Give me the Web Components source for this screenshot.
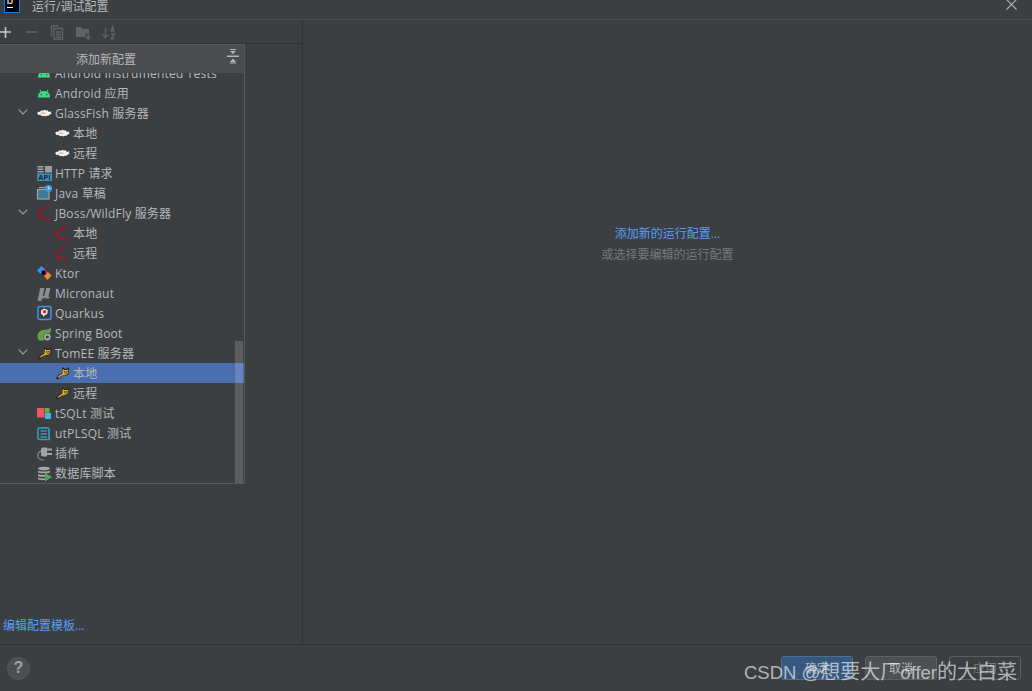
<!DOCTYPE html>
<html lang="zh">
<head>
<meta charset="utf-8">
<title>运行/调试配置</title>
<style>
	html, body { margin: 0; height: 100%; background: #3c3f41; }
	body { font: 12px "Open Sans", "Noto Sans CJK SC", sans-serif; color: #b6b8ba; }
</style>
</head>
<body>
<run-config-dialog></run-config-dialog>

<script>
const ICONS = {
	android: `<path fill="#3ddc84" d="M1 12.500c0-2.800 1-4.600 2.600-5.500L2.500 4.800l.8-.4L4.500 6.500a6 6 0 0 1 5 0l1.200-2.100.8.400L10.400 7C12 7.900 13 9.700 13 12.500z"/><circle cx="4.300" cy="9.700" r=".8" fill="#2b5a42"/><circle cx="9.700" cy="9.700" r=".8" fill="#2b5a42"/>`,
	glassfish: `<path fill="#f4f4f4" d="M0 8l2-1.500.8.4L4.500 5.200l1.500.6 1.500-1 1.500.7 1.500-.3 1.500 1.800 2.500-.7-.8 1.700 1.300 1-2 .3-1.500 1.400-2 .1-1 .7-1.500-.7-1.500.5L3 9.800l-1.500.2z"/><ellipse cx="6" cy="8.200" rx="2.800" ry="1" fill="#dcc3ad"/>`,
	api: `<rect x=".5" y="1" width="6" height="1.500" fill="#a0a2a4"/><rect x=".5" y="3.500" width="6" height="1.500" fill="#a0a2a4"/><rect x=".5" y="6" width="6" height="1.500" fill="#a0a2a4"/><rect x="8" y="1" width="7" height="6.500" fill="#9a9c9e"/><rect y="8.500" width="15" height="7.500" fill="#3f8fba"/><text x="7.500" y="14.800" text-anchor="middle" font-family="Liberation Sans" font-size="7" font-weight="700" fill="#16242c">API</text>`,
	scratch: `<rect x=".5" y="4.500" width="11.500" height="9.500" fill="#3b7c9a" stroke="#a0a2a4" stroke-width="1.200"/><path stroke="#a0a2a4" stroke-width="1.200" d="M2 2.500h7"/><circle cx="11.700" cy="3.400" r="3.400" fill="#40a0e0"/><path stroke="#fff" stroke-width=".8" fill="none" d="M11.700 1.800v1.900h1.200"/>`,
	jboss: `<g fill="#d3031c"><circle cx="11.300" cy="1" r=".9"/><circle cx="8" cy="2.700" r="1"/><circle cx="5.500" cy="3.500" r=".9"/><circle cx="3.700" cy="5.300" r="1.100"/><circle cx="2" cy="8.300" r="1.200"/><circle cx="3" cy="11.500" r="1.300"/><circle cx="6.300" cy="13.600" r="1.400"/><circle cx="10.800" cy="14.300" r="1.400"/></g>`,
	ktor: `<path fill="#16a0f5" d="M0 5.500 4.500 1 8 4.500 3.500 9z"/><path fill="#ef8a2c" d="M7 11l4-4 3.500 3.500-4 4.500z"/><path fill="#d9469e" d="M6 3l2 1.500 3 3-2.500 3L5 7z"/><rect x="4.700" y="5.600" width="4" height="4" fill="#000"/>`,
	micronaut: `<path fill="#8a8d90" d="M3.200 3h4.300L5.800 10c-.3 1.200.8 1.200 1.500.6L9.200 3h4.300l-2 8c-.2.9.3 1 1.300.7l-.3 1.400c-1.900 1-3.900.9-4.300-.5-1 .9-2 1.200-3 .9L4.200 16H.5z"/>`,
	quarkus: `<rect x="1" y="1.500" width="13" height="13" rx="2" fill="none" stroke="#4695eb" stroke-width="1.400"/><path fill="#f2e8ea" d="M4 5.500l3-2 3.800 1.500-.5 4-2.800 1.300-.7 1.900-.7-1.900-2-1.300z"/><circle cx="7.500" cy="6.700" r="1.700" fill="#d8283e"/>`,
	spring: `<path fill="#62a14a" d="M.5 11.500C.5 7.500 3.500 5 7.500 4.800c3 0 5.500-1 6.500-2.300.5 3-.5 5.500-2 6.500l-5 6.500H3C1.500 15.500.5 13.500.5 11.500z"/><circle cx="10.300" cy="12" r="3.900" fill="#3c3f41"/><circle cx="10.300" cy="12" r="2.500" fill="none" stroke="#a5a7a9" stroke-width="1.800"/>`,
	tomee: `<path fill="#1d1d1d" d="M.8 13l3.700-3.700 2.500-1.300V3l1.500-.8L9.800 4h2l1.500-1.800.8.8v5l-2 2.500-3-.2-3 1.500-3.500 2.700z"/><path fill="#dfb02f" d="M7.800 3.700l1.500 1.300h3l.9-1 .1 3.800-1.600 2-3.400-.3-1-.5zM2.200 12.500l3-2.800 2.500-1 1.800 1.300-3 .8-2.500 1.700z"/><path fill="#1d1d1d" d="M9 6.300h1.300v1.200H9zM11.300 6.300h1.200v1.200h-1.200zM10.200 8.300h1.300v.7h-1.300z"/>`,
	tsqlt: `<rect y="3" width="7.500" height="9.500" fill="#e85a5f"/><rect x="8" y="3" width="4.500" height="4.700" fill="#5fb548"/><rect x="8" y="8" width="6" height="6" fill="#40b6e0"/>`,
	utplsql: `<path fill="none" stroke="#2e9ab4" stroke-width="1.700" d="M3 2.800h7c1.200 0 2 .7 2 1.700v9c0 .4.300.8 1 1H3c-1.200 0-2-.7-2-1.700V4.500c0-1 .8-1.700 2-1.700z"/><path stroke="#2e9ab4" stroke-width="1.500" d="M3.500 6h6.500M3.500 9h6.500M3.500 12h6.500"/>`,
	plugin: `<path fill="none" stroke="#85888b" stroke-width="1.200" d="M7 15H5.500C3 15 .8 13 .8 10.500S3 6 5 5.700"/><path fill="#a0a2a4" d="M6 2.500h4v9H6c-1.300 0-2-.8-2-2v-5c0-1.200.7-2 2-2z"/><path stroke="#a0a2a4" stroke-width="1.800" d="M10 4.500h5M10 9h5"/>`,
	dbscript: `<ellipse cx="7" cy="3.500" rx="6" ry="1.800" fill="#a5a7a9"/><path fill="#a5a7a9" d="M1 5.800c1.200 1 10.800 1 12 0v1.800c-1.200 1-10.800 1-12 0zM1 9c1 .9 5.500 1 7 .8v1.900c-2 .3-6 .1-7-.8zM1 12.500c1 .9 5.500 1 7 .8v1.700c-2 .3-6 .2-7-.7z"/><path fill="#4fa55c" d="M8 7.500 15 12l-7 4.500z"/>`
};

const CONFIGS = [
	{ icon: 'android', label: 'Android Instrumented Tests' },
	{ icon: 'android', label: 'Android 应用' },
	{ icon: 'glassfish', label: 'GlassFish 服务器', open: true },
	{ icon: 'glassfish', label: '本地', child: true },
	{ icon: 'glassfish', label: '远程', child: true },
	{ icon: 'api', label: 'HTTP 请求' },
	{ icon: 'scratch', label: 'Java 草稿' },
	{ icon: 'jboss', label: 'JBoss/WildFly 服务器', open: true },
	{ icon: 'jboss', label: '本地', child: true },
	{ icon: 'jboss', label: '远程', child: true },
	{ icon: 'ktor', label: 'Ktor' },
	{ icon: 'micronaut', label: 'Micronaut' },
	{ icon: 'quarkus', label: 'Quarkus' },
	{ icon: 'spring', label: 'Spring Boot' },
	{ icon: 'tomee', label: 'TomEE 服务器', open: true },
	{ icon: 'tomee', label: '本地', child: true, selected: true },
	{ icon: 'tomee', label: '远程', child: true },
	{ icon: 'tsqlt', label: 'tSQLt 测试' },
	{ icon: 'utplsql', label: 'utPLSQL 测试' },
	{ icon: 'plugin', label: '插件' },
	{ icon: 'dbscript', label: '数据库脚本' }
];

class TreeRow extends HTMLElement {
	constructor() {
		super();
		this.attachShadow({ mode: 'open' });
	}

	//attributes are set after createElement, so render here
	connectedCallback() {
		const icon = ICONS[this.getAttribute('icon')] || '';
		const chevron = this.hasAttribute('open')
			? '<svg width="10" height="6" viewBox="0 0 10 6"><path d="M.7.7 5 5 9.300.7" fill="none" stroke="#9a9c9e" stroke-width="1.200"/></svg>'
			: '';
		this.shadowRoot.innerHTML = `
			<style>
				:host {
					display: flex;
					align-items: center;
					height: 20px;
					padding-left: 18px;
					white-space: nowrap;
					letter-spacing: 0.2px;
				}
				:host([child]) { padding-left: 36px; }
				:host([selected]) { background: #4b6eaf; }
				#chevron {
					width: 10px;
					height: 6px;
					display: flex;
					margin-right: 9px;
					margin-top: -3px;
				}
				#icon { width: 16px; height: 16px; margin-right: 2px; flex: none; overflow: visible; }
			</style>
			<span id="chevron">${chevron}</span>
			<svg id="icon" viewBox="0 0 16 16">${icon}</svg>
			<span><slot></slot></span>
		`;
	}
}

class AddConfigPopup extends HTMLElement {
	constructor() {
		super();
		this.attachShadow({ mode: 'open' });
		this.shadowRoot.innerHTML = `
			<style>
				:host {
					position: absolute;
					top: 44px;
					left: -1px;
					width: 244px;
					height: 438px;
					box-sizing: content-box;
					border: 1px solid #56585a;
					background: #3c3f41;
					display: flex;
					flex-direction: column;
					overflow: hidden;
				}
				header {
					flex: none;
					height: 28px;
					background: #4a4c4f;
					display: flex;
					align-items: center;
					justify-content: center;
					position: relative;
					z-index: 1;
					padding-right: 32px;
					box-sizing: border-box;
				}
				#collapse { position: absolute; right: 3px; top: 3px; }
				#body { flex: 1; position: relative; overflow: hidden; }
				#list { margin-top: -10px; }
				#thumb {
					position: absolute;
					top: 268px;
					right: 1px;
					width: 8px;
					bottom: 0;
					background: rgba(255, 255, 255, 0.16);
				}
			</style>
			<header>
				<span>添加新配置</span>
				<svg id="collapse" width="14" height="16" viewBox="0 0 14 16">
					<path fill="#b4b6b8" d="M3 1h6v1H3zM3 3h6L6 6zM0 7.500h12V9H0zM6 10.500 9 14H3zM3 14.500h6v1H3z"/>
				</svg>
			</header>
			<div id="body">
				<div id="list"><slot></slot></div>
				<div id="thumb"></div>
			</div>
		`;
	}
}

class ConfigToolbar extends HTMLElement {
	constructor() {
		super();
		this.attachShadow({ mode: 'open' });
		this.shadowRoot.innerHTML = `
			<style>
				:host {
					display: flex;
					align-items: center;
					gap: 10px;
					height: 23px;
					border-bottom: 1px solid #323232;
					margin-left: -3px;
				}
				svg { width: 16px; height: 16px; flex: none; }
			</style>
			<svg viewBox="0 0 16 16"><path stroke="#c8c8c8" stroke-width="1.600" d="M3 8h11M8.500 3v11"/></svg>
			<svg viewBox="0 0 16 16"><path stroke="#606264" stroke-width="1.600" d="M3 8h11"/></svg>
			<svg viewBox="0 0 16 16"><path fill="none" stroke="#606264" stroke-width="1.300" d="M2.500 12V2h7M5 4.500h8.500V15H5zM7 8h5M7 10.500h5M7 13h5"/></svg>
			<svg viewBox="0 0 16 16"><path fill="#606264" d="M1 3h5l1.500 2H14v4.500h-3.500V13H1z"/><path stroke="#606264" stroke-width="1.500" d="M10.500 13.500H16M13.200 10.500v6"/></svg>
			<svg viewBox="0 0 16 16"><path stroke="#606264" stroke-width="1.300" fill="none" d="M4.500 4v9M1.500 10.500l3 3 3-3M10 8l1.500-5 1.500 5M10.500 6.500h2M10 10h3.500L10 14.500h3.500"/></svg>
		`;
	}
}

class DialogButton extends HTMLElement {
	constructor() {
		super();
		this.attachShadow({ mode: 'open' });
		this.shadowRoot.innerHTML = `
			<style>
				:host {
					display: flex;
					align-items: center;
					justify-content: center;
					box-sizing: border-box;
					width: 72px;
					height: 24px;
					border: 1px solid #5e6060;
					border-radius: 3px;
					background: #4c5052;
				}
				:host([primary]) { background: #365880; border-color: #4c708c; }
				:host([disabled]) { background: none; color: #777; }
			</style>
			<slot></slot>
		`;
	}
}

class RunConfigDialog extends HTMLElement {
	constructor() {
		super();
		this.attachShadow({ mode: 'open' });
		this.shadowRoot.innerHTML = `
			<style>
				:host {
					display: flex;
					flex-direction: column;
					width: 1032px;
					height: 691px;
					overflow: hidden;
					position: relative;
					background: #3c3f41;
				}
				#title {
					flex: none;
					height: 19px;
					box-sizing: content-box;
					display: flex;
					align-items: flex-end;
					border-bottom: 1px solid #4a4c4e;
				}
				#logo {
					flex: none;
					box-sizing: border-box;
					width: 16px;
					height: 16px;
					margin: 0 12px 6px 4px;
					border: 1px solid #087cfa;
					background: #000;
					color: #fff;
					font: 700 7px/8px "Liberation Sans", sans-serif;
					padding-left: 2px;
				}
				#logo i { display: block; width: 6px; height: 1px; background: #fff; margin-top: 1px; }
				#caption { flex: 1; padding-bottom: 4px; line-height: 16px; }
				#close { flex: none; margin: 0 15px 9px 0; }
				#main { flex: 1; display: flex; min-height: 0; }
				#left {
					flex: none;
					width: 302px;
					border-right: 1px solid #323232;
					display: flex;
					flex-direction: column;
				}
				#left-fill { flex: 1; }
				#templates { padding: 0 0 9px 3px; color: #589df6; line-height: 18px; }
				#empty {
					flex: 1;
					display: flex;
					flex-direction: column;
					align-items: center;
					gap: 5px;
					padding-top: 206px;
					line-height: 16px;
				}
				#add { color: #589df6; }
				#hint { color: #787878; }
				#footer {
					flex: none;
					height: 46px;
					border-top: 1px solid #323232;
					display: flex;
					align-items: center;
					gap: 12px;
					padding: 0 11px 0 7px;
				}
				#help {
					width: 23px;
					height: 23px;
					border-radius: 50%;
					background: #4c4f51;
					border: 1px solid #555759;
					box-sizing: border-box;
					display: flex;
					align-items: center;
					justify-content: center;
					color: #a0a2a4;
					font: 700 16px "Liberation Sans", sans-serif;
					margin-right: auto;
				}
				#watermark {
					position: absolute;
					left: 744px;
					top: 659px;
					font: 18.5px/26px "Liberation Sans", "Noto Sans CJK SC", sans-serif;
					color: rgba(255, 255, 255, 0.62);
					white-space: nowrap;
				}
				#watermark b { font-weight: 400; font-size: 20px; }
			</style>
			<div id="title">
				<div id="logo">IJ<i></i></div>
				<div id="caption">运行/调试配置</div>
				<svg id="close" width="11" height="11" viewBox="0 0 11 11"><path d="M.5.5l10 10M10.500.5l-10 10" stroke="#aeb0b2" stroke-width="1.100"/></svg>
			</div>
			<div id="main">
				<div id="left">
					<config-toolbar></config-toolbar>
					<div id="left-fill"></div>
					<div id="templates">编辑配置模板...</div>
				</div>
				<div id="empty">
					<div id="add">添加新的运行配置...</div>
					<div id="hint">或选择要编辑的运行配置</div>
				</div>
			</div>
			<div id="footer">
				<div id="help">?</div>
				<dialog-button primary>确定</dialog-button>
				<dialog-button>取消</dialog-button>
				<dialog-button disabled>应用</dialog-button>
			</div>
			<add-config-popup id="popup"></add-config-popup>
			<div id="watermark">CSDN @<b>想要大厂</b>offer<b>的大白菜</b></div>
		`;
		const popup = this.shadowRoot.querySelector('#popup');
		for (const c of CONFIGS) {
			const row = document.createElement('tree-row');
			row.setAttribute('icon', c.icon);
			if (c.open) row.setAttribute('open', '');
			if (c.child) row.setAttribute('child', '');
			if (c.selected) row.setAttribute('selected', '');
			row.textContent = c.label;
			popup.appendChild(row);
		}
	}
}

customElements.define('tree-row', TreeRow);
customElements.define('add-config-popup', AddConfigPopup);
customElements.define('config-toolbar', ConfigToolbar);
customElements.define('dialog-button', DialogButton);
customElements.define('run-config-dialog', RunConfigDialog);
</script>
</body>
</html>
